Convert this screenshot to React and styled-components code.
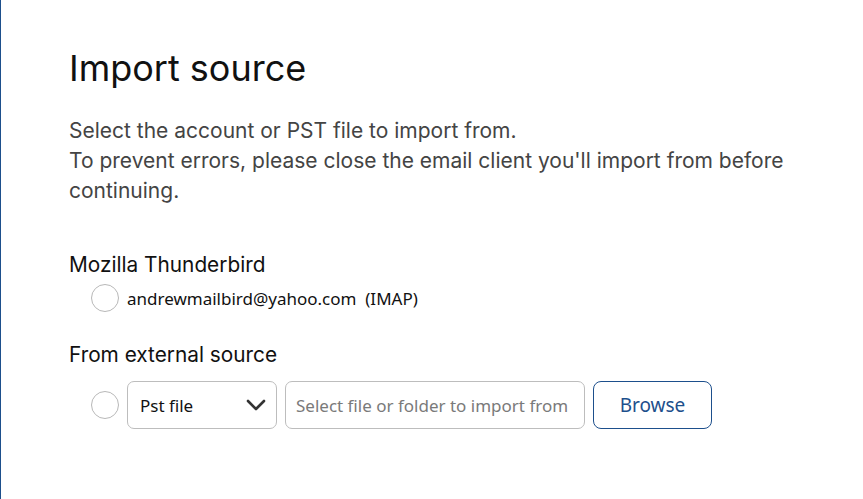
import React from 'react';
import styled, { createGlobalStyle } from 'styled-components';

const GlobalStyle = createGlobalStyle`
  html, body {
    margin: 0;
    padding: 0;
    background: #ffffff;
  }
`;

const Page = styled.div`
  box-sizing: border-box;
  width: 863px;
  height: 499px;
  border-left: 1px solid #1d4f8c;
  padding: 46px 0 0 68px;
  font-family: Inter, "Liberation Sans", sans-serif;
`;

const Title = styled.h1`
  margin: 0;
  font-size: 36px;
  font-weight: 400;
  color: #111;
  line-height: 44px;
`;

const Description = styled.p`
  margin: 26px 0 0;
  font-size: 21px;
  line-height: 30px;
  color: #444;
  width: 740px;
`;

const Section = styled.div`
  margin-top: ${(p) => p.top}px;
  display: flex;
  flex-direction: column;
`;

const SectionLabel = styled.div`
  font-size: 20.8px;
  line-height: 26px;
  color: #111;
`;

const OptionRow = styled.div`
  display: flex;
  align-items: center;
  gap: 8px;
  padding-left: 22px;
  margin-top: ${(p) => p.top}px;
`;

const Radio = styled.span`
  box-sizing: border-box;
  width: 28px;
  height: 28px;
  border-radius: 50%;
  border: 1.5px solid #b8b8b8;
  background: #fff;
  flex: none;
`;

const AccountText = styled.span`
  font-family: "Noto Sans", "Open Sans", sans-serif;
  font-size: 17px;
  color: #111;
  white-space: pre;
`;

const Select = styled.div`
  box-sizing: border-box;
  width: 150px;
  height: 48px;
  border: 1.5px solid #bdbdbd;
  border-radius: 7px;
  display: flex;
  align-items: center;
  justify-content: space-between;
  padding: 0 10px 0 12px;
  font-family: "Noto Sans", "Open Sans", sans-serif;
  font-size: 17px;
  color: #111;
`;

const FileInput = styled.div`
  box-sizing: border-box;
  width: 300px;
  height: 48px;
  border: 1.5px solid #bdbdbd;
  border-radius: 7px;
  display: flex;
  align-items: center;
  padding: 0 10px;
  font-family: "Noto Sans", "Open Sans", sans-serif;
  font-size: 17px;
  color: #7a7a7a;
  white-space: nowrap;
  overflow: hidden;
`;

const BrowseButton = styled.button`
  box-sizing: border-box;
  width: 119px;
  height: 48px;
  border: 1.5px solid #1d4f8c;
  border-radius: 8px;
  background: #fff;
  color: #1d4f8c;
  font-family: "Noto Sans", "Open Sans", sans-serif;
  font-size: 19px;
  padding: 0;
`;

const Chevron = () => (
  <svg width="20" height="12" viewBox="0 0 20 12" fill="none">
    <path d="M2 2l8 8 8-8" stroke="#333" strokeWidth="2.6" strokeLinecap="round" strokeLinejoin="round" />
  </svg>
);

const App = () => {
  return (
    <Page>
      <GlobalStyle />
      <Title>Import source</Title>
      <Description>
        Select the account or PST file to import from.
        <br />
        To prevent errors, please close the email client you'll import from before continuing.
      </Description>
      <Section top={46}>
        <SectionLabel>Mozilla Thunderbird</SectionLabel>
        <OptionRow top={6}>
          <Radio />
          <AccountText>andrewmailbird@yahoo.com  (IMAP)</AccountText>
        </OptionRow>
      </Section>
      <Section top={30}>
        <SectionLabel>From external source</SectionLabel>
        <OptionRow top={13}>
          <Radio />
          <Select>
            <span>Pst file</span>
            <Chevron />
          </Select>
          <FileInput>Select file or folder to import from</FileInput>
          <BrowseButton>Browse</BrowseButton>
        </OptionRow>
      </Section>
    </Page>
  );
};

export default App;
